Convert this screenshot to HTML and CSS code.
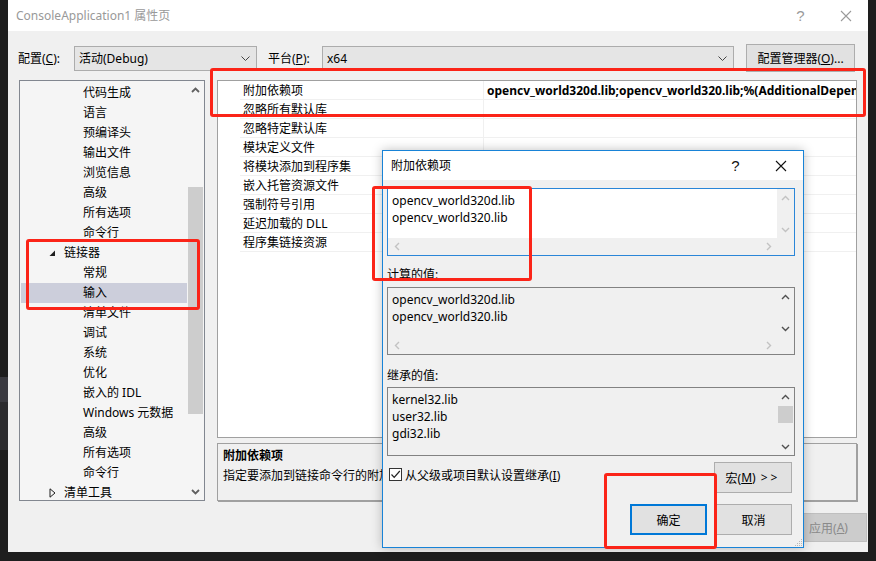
FILE: index.html
```html
<!DOCTYPE html>
<html lang="zh-CN">
<head>
    <meta charset="UTF-8">
    <title>ConsoleApplication1 属性页</title>
    <link rel="stylesheet" href="styles.css">
</head>
<body>
<div class="desktop">
    <div class="ide-strip ide-strip-a"></div>
    <div class="ide-strip ide-strip-b"></div>

    <!-- property pages window -->
    <div class="window main-window">
        <div class="titlebar">
            <span class="title">ConsoleApplication1 属性页</span>
            <span class="caption-btn help">?</span>
            <span class="caption-btn close">
                <svg width="12" height="12" viewBox="0 0 12 12"><path d="M1 1L11 11M11 1L1 11" stroke="#9a9a9a" stroke-width="1.1" fill="none"/></svg>
            </span>
        </div>
        <div class="page">
            <div class="config-row">
                <span class="config-label">配置(<u>C</u>):</span>
                <div class="combo combo-config">
                    <span>活动(Debug)</span>
                    <svg width="9" height="5" viewBox="0 0 9 5"><polyline points="0.5,0.5 4.5,4.5 8.5,0.5" stroke="#444" fill="none"/></svg>
                </div>
                <span class="config-label platform-label">平台(<u>P</u>):</span>
                <div class="combo combo-platform">
                    <span>x64</span>
                    <svg width="9" height="5" viewBox="0 0 9 5"><polyline points="0.5,0.5 4.5,4.5 8.5,0.5" stroke="#444" fill="none"/></svg>
                </div>
                <button class="btn btn-manager">配置管理器(<u>O</u>)...</button>
            </div>

            <div class="content">
                <div class="tree">
                    <ul class="tree-list">
                        <li class="leaf">代码生成</li>
                        <li class="leaf">语言</li>
                        <li class="leaf">预编译头</li>
                        <li class="leaf">输出文件</li>
                        <li class="leaf">浏览信息</li>
                        <li class="leaf">高级</li>
                        <li class="leaf">所有选项</li>
                        <li class="leaf">命令行</li>
                        <li class="node">
                            <svg class="twisty" width="7" height="7" viewBox="0 0 7 7"><polygon points="6,0.5 6,6 0.5,6" fill="#1e1e1e"/></svg>链接器
                        </li>
                        <li class="leaf">常规</li>
                        <li class="leaf selected">输入</li>
                        <li class="leaf">清单文件</li>
                        <li class="leaf">调试</li>
                        <li class="leaf">系统</li>
                        <li class="leaf">优化</li>
                        <li class="leaf">嵌入的 IDL</li>
                        <li class="leaf">Windows 元数据</li>
                        <li class="leaf">高级</li>
                        <li class="leaf">所有选项</li>
                        <li class="leaf">命令行</li>
                        <li class="node">
                            <svg class="twisty" width="7" height="10" viewBox="0 0 7 10"><polygon points="1,0.8 6,5 1,9.2" fill="none" stroke="#1e1e1e"/></svg>清单工具
                        </li>
                    </ul>
                    <div class="vscroll tree-scroll">
                        <div class="arrow">
                            <svg width="9" height="6" viewBox="0 0 9 6"><polyline points="1,5 4.5,1.5 8,5" stroke="#606060" stroke-width="1.8" fill="none"/></svg>
                        </div>
                        <div class="track"><div class="thumb tree-thumb"></div></div>
                        <div class="arrow">
                            <svg width="9" height="6" viewBox="0 0 9 6"><polyline points="1,1 4.5,4.5 8,1" stroke="#606060" stroke-width="1.8" fill="none"/></svg>
                        </div>
                    </div>
                </div>

                <div class="right-col">
                    <div class="grid">
                        <div class="grid-row">
                            <span class="gutter"></span>
                            <span class="cell name">附加依赖项</span>
                            <span class="cell value strong">opencv_world320d.lib;opencv_world320.lib;%(AdditionalDependencies)</span>
                        </div>
                        <div class="grid-row"><span class="gutter"></span><span class="cell name">忽略所有默认库</span><span class="cell value"></span></div>
                        <div class="grid-row"><span class="gutter"></span><span class="cell name">忽略特定默认库</span><span class="cell value"></span></div>
                        <div class="grid-row"><span class="gutter"></span><span class="cell name">模块定义文件</span><span class="cell value"></span></div>
                        <div class="grid-row"><span class="gutter"></span><span class="cell name">将模块添加到程序集</span><span class="cell value"></span></div>
                        <div class="grid-row"><span class="gutter"></span><span class="cell name">嵌入托管资源文件</span><span class="cell value"></span></div>
                        <div class="grid-row"><span class="gutter"></span><span class="cell name">强制符号引用</span><span class="cell value"></span></div>
                        <div class="grid-row"><span class="gutter"></span><span class="cell name">延迟加载的 DLL</span><span class="cell value"></span></div>
                        <div class="grid-row"><span class="gutter"></span><span class="cell name">程序集链接资源</span><span class="cell value"></span></div>
                    </div>
                    <div class="desc">
                        <div class="desc-title">附加依赖项</div>
                        <div class="desc-text">指定要添加到链接命令行的附加项。</div>
                    </div>
                </div>
            </div>

            <div class="footer">
                <button class="btn btn-disabled">应用(<u>A</u>)</button>
            </div>
        </div>
    </div>

    <!-- additional dependencies dialog -->
    <div class="window dialog">
        <div class="titlebar dialog-titlebar">
            <span class="title dialog-title">附加依赖项</span>
            <span class="caption-btn help dark">?</span>
            <span class="caption-btn close">
                <svg width="12" height="12" viewBox="0 0 12 12"><path d="M1 1L11 11M11 1L1 11" stroke="#111" stroke-width="1.1" fill="none"/></svg>
            </span>
        </div>
        <div class="dialog-body">
            <div class="listbox editable">
                <div class="listbox-main">
                    <div class="lines">
                        <div>opencv_world320d.lib</div>
                        <div>opencv_world320.lib</div>
                    </div>
                    <div class="vscroll">
                        <div class="arrow"><svg width="9" height="6" viewBox="0 0 9 6"><polyline points="1,5 4.5,1.5 8,5" stroke="#c2c2c2" stroke-width="1.4" fill="none"/></svg></div>
                        <div class="track"></div>
                        <div class="arrow"><svg width="9" height="6" viewBox="0 0 9 6"><polyline points="1,1 4.5,4.5 8,1" stroke="#c2c2c2" stroke-width="1.4" fill="none"/></svg></div>
                    </div>
                </div>
                <div class="hscroll">
                    <div class="arrow"><svg width="6" height="9" viewBox="0 0 6 9"><polyline points="5,1 1.5,4.5 5,8" stroke="#c2c2c2" stroke-width="1.4" fill="none"/></svg></div>
                    <div class="track"></div>
                    <div class="arrow"><svg width="6" height="9" viewBox="0 0 6 9"><polyline points="1,1 4.5,4.5 1,8" stroke="#c2c2c2" stroke-width="1.4" fill="none"/></svg></div>
                    <div class="corner"></div>
                </div>
            </div>

            <div class="field-label label-computed">计算的值:</div>
            <div class="listbox readonly">
                <div class="listbox-main">
                    <div class="lines">
                        <div>opencv_world320d.lib</div>
                        <div>opencv_world320.lib</div>
                    </div>
                    <div class="vscroll">
                        <div class="arrow"><svg width="9" height="6" viewBox="0 0 9 6"><polyline points="1,5 4.5,1.5 8,5" stroke="#505050" stroke-width="1.4" fill="none"/></svg></div>
                        <div class="track"></div>
                        <div class="arrow"><svg width="9" height="6" viewBox="0 0 9 6"><polyline points="1,1 4.5,4.5 8,1" stroke="#505050" stroke-width="1.4" fill="none"/></svg></div>
                    </div>
                </div>
                <div class="hscroll">
                    <div class="arrow"><svg width="6" height="9" viewBox="0 0 6 9"><polyline points="5,1 1.5,4.5 5,8" stroke="#c2c2c2" stroke-width="1.4" fill="none"/></svg></div>
                    <div class="track"></div>
                    <div class="arrow"><svg width="6" height="9" viewBox="0 0 6 9"><polyline points="1,1 4.5,4.5 1,8" stroke="#c2c2c2" stroke-width="1.4" fill="none"/></svg></div>
                    <div class="corner"></div>
                </div>
            </div>

            <div class="field-label label-inherited">继承的值:</div>
            <div class="listbox readonly inherited">
                <div class="listbox-main">
                    <div class="lines">
                        <div>kernel32.lib</div>
                        <div>user32.lib</div>
                        <div>gdi32.lib</div>
                    </div>
                    <div class="vscroll">
                        <div class="arrow"><svg width="9" height="6" viewBox="0 0 9 6"><polyline points="1,5 4.5,1.5 8,5" stroke="#505050" stroke-width="1.4" fill="none"/></svg></div>
                        <div class="track"><div class="thumb inherited-thumb"></div></div>
                        <div class="arrow"><svg width="9" height="6" viewBox="0 0 9 6"><polyline points="1,1 4.5,4.5 8,1" stroke="#505050" stroke-width="1.4" fill="none"/></svg></div>
                    </div>
                </div>
            </div>

            <div class="option-row">
                <div class="check">
                    <span class="checkbox">
                        <svg width="11" height="11" viewBox="0 0 11 11"><polyline points="1.5,5.5 4.2,8.3 9.8,2" stroke="#222" stroke-width="1.2" fill="none"/></svg>
                    </span>
                    <span>从父级或项目默认设置继承(<u>I</u>)</span>
                </div>
                <button class="btn btn-macro">宏(<u>M</u>) <span class="gt">&gt;&gt;</span></button>
            </div>

            <div class="dialog-buttons">
                <button class="btn btn-default">确定</button>
                <button class="btn">取消</button>
            </div>
        </div>
        <svg class="grip" width="10" height="10" viewBox="0 0 10 10">
            <g fill="#b8b8b8">
                <rect x="8" y="2" width="1" height="1"/><rect x="6" y="4" width="1" height="1"/><rect x="8" y="4" width="1" height="1"/>
                <rect x="4" y="6" width="1" height="1"/><rect x="6" y="6" width="1" height="1"/><rect x="8" y="6" width="1" height="1"/>
                <rect x="2" y="8" width="1" height="1"/><rect x="4" y="8" width="1" height="1"/><rect x="6" y="8" width="1" height="1"/><rect x="8" y="8" width="1" height="1"/>
            </g>
        </svg>
    </div>

    <!-- red annotation boxes -->
    <div class="mark mark-value"></div>
    <div class="mark mark-tree"></div>
    <div class="mark mark-edit"></div>
    <div class="mark mark-ok"></div>
</div>
</body>
</html>
```

FILE: styles.css
```css
* {
    box-sizing: border-box;
}
body {
    margin: 0;
    background-color: #1e1e1e;
    font-family: 'Segoe UI', 'Noto Sans', 'Noto Sans CJK SC', sans-serif;
    font-size: 12px;
    color: #000;
}
u {
    text-decoration: underline;
    text-underline-offset: 1px;
}
.desktop {
    position: relative;
    width: 876px;
    height: 561px;
    overflow: hidden;
    background-color: #1e1e1e;
}
.ide-strip {
    position: absolute;
    left: 0;
    width: 8px;
}
.ide-strip-a {
    top: 377px;
    height: 25px;
    background-color: #3a3a40;
}
.ide-strip-b {
    top: 402px;
    height: 48px;
    background-color: #2b2b2e;
}

/* windows */
.window {
    position: absolute;
    background-color: #f0f0f0;
}
.main-window {
    left: 8px;
    top: 0;
    width: 860px;
    height: 552px;
}
.titlebar {
    height: 31px;
    background-color: #fff;
    display: flex;
    align-items: center;
    padding-left: 8px;
}
.title {
    flex: 1;
    color: #999;
    font-size: 12px;
    padding-bottom: 1px;
}
.caption-btn {
    width: 45px;
    text-align: center;
    display: flex;
    align-items: center;
    justify-content: center;
}
.help {
    font-family: 'Liberation Sans', sans-serif;
    font-size: 15px;
    color: #9a9a9a;
}
.help.dark {
    color: #111;
}

.page {
    padding: 13px 7px 0 10px;
}
.config-row {
    display: flex;
    align-items: center;
    height: 28px;
}
.config-label {
    width: 56px;
}
.platform-label {
    width: 54px;
    margin-left: 11px;
}
.combo {
    height: 25px;
    background-color: #e5e5e5;
    border: 1px solid #acacac;
    display: flex;
    align-items: center;
    justify-content: space-between;
    padding: 0 6px 0 4px;
}
.combo-config {
    width: 183px;
}
.combo-platform {
    width: 412px;
}
.btn {
    font-family: inherit;
    font-size: 12px;
    color: #000;
    background-color: #e1e1e1;
    border: 1px solid #adadad;
    padding: 0;
    display: flex;
    align-items: center;
    justify-content: center;
}
.btn-manager {
    margin-left: 12px;
    width: 109px;
    height: 28px;
}

.content {
    display: flex;
    gap: 12px;
    margin-top: 8px;
}
.tree {
    margin-left: 1px;
    width: 186px;
    height: 421px;
    border: 1px solid #828790;
    background-color: #f5f5f5;
    display: flex;
}
.tree-list {
    list-style: none;
    margin: 0;
    padding: 2px 0 0 0;
    flex: 1;
}
.tree-list li {
    height: 20px;
    line-height: 20px;
    white-space: nowrap;
    display: flex;
    align-items: center;
}
.tree-list .leaf {
    padding-left: 63px;
}
.tree-list .node {
    padding-left: 29px;
}
.twisty {
    margin-right: 8px;
}
.tree-list .selected {
    background-color: #cccedb;
    margin-left: 1px;
    padding-left: 62px;
}

.vscroll {
    width: 17px;
    display: flex;
    flex-direction: column;
    background-color: #f0f0f0;
}
.vscroll .arrow {
    height: 17px;
    display: flex;
    align-items: center;
    justify-content: center;
}
.vscroll .track {
    flex: 1;
}
.thumb {
    background-color: #cdcdcd;
    margin: 0 1px;
}
.tree-scroll {
    background-color: #f5f5f5;
}
.tree-thumb {
    margin-top: 89px;
    height: 227px;
}

.right-col {
    width: 640px;
    display: flex;
    flex-direction: column;
    gap: 5px;
}
.grid {
    height: 358px;
    background-color: #fff;
    border: 1px solid #a0a0a0;
}
.grid-row {
    display: flex;
    height: 19px;
}
.gutter {
    width: 22px;
    flex: none;
}
.cell {
    border-bottom: 1px solid #f0f0f0;
    padding-top: 2px;
    line-height: 16px;
    white-space: nowrap;
    overflow: hidden;
}
.name {
    width: 244px;
    flex: none;
    padding-left: 3px;
    border-right: 1px solid #f0f0f0;
}
.value {
    flex: 1;
    padding-left: 3px;
}
.strong {
    font-weight: bold;
}
.desc {
    height: 58px;
    border: 1px solid #a0a0a0;
    box-shadow: 1px 1px 0 #a0a0a0;
    padding: 2px 5px 0;
    overflow: hidden;
}
.desc-title {
    font-weight: bold;
    line-height: 20px;
}
.desc-text {
    width: 160px;
    line-height: 20px;
    white-space: nowrap;
    overflow: hidden;
}

.footer {
    display: flex;
    justify-content: flex-end;
    margin-top: 12px;
    margin-right: -6px;
}
.footer .btn {
    width: 77px;
    height: 29px;
}
.btn-disabled {
    background-color: #cccccc;
    border-color: #bfbfbf;
    color: #8a8a8a;
}

/* dialog */
.dialog {
    left: 382px;
    top: 150px;
    width: 422px;
    height: 398px;
    border: 1px solid #1883d7;
    box-shadow: 0 0 10px rgba(0, 0, 0, 0.25);
}
.dialog-titlebar {
    height: 29px;
}
.dialog-title {
    color: #000;
}
.dialog-body {
    padding: 8px 8px 0 4px;
}
.listbox {
    border: 1px solid #828282;
    display: flex;
    flex-direction: column;
    height: 68px;
}
.listbox.editable {
    border-color: #2a86d8;
    background-color: #fff;
}
.listbox.readonly {
    background-color: #f0f0f0;
}
.listbox.inherited {
    height: 69px;
}
.listbox-main {
    flex: 1;
    display: flex;
    min-height: 0;
}
.lines {
    flex: 1;
    padding: 3px 4px;
    line-height: 17px;
    white-space: nowrap;
}
.hscroll {
    height: 17px;
    display: flex;
    background-color: #f0f0f0;
}
.hscroll .arrow {
    width: 17px;
    display: flex;
    align-items: center;
    justify-content: center;
}
.hscroll .track {
    flex: 1;
}
.hscroll .corner {
    width: 17px;
}
.inherited-thumb {
    margin-top: 1px;
    height: 17px;
}
.field-label {
    line-height: 17px;
}
.label-computed {
    margin-top: 10px;
    margin-bottom: 4px;
}
.label-inherited {
    margin-top: 12px;
    margin-bottom: 3px;
}
.option-row {
    display: flex;
    justify-content: space-between;
    align-items: flex-start;
    margin-top: 6px;
}
.check {
    display: flex;
    align-items: center;
    height: 17px;
    margin-top: 4px;
    margin-left: 2px;
    gap: 3px;
}
.checkbox {
    width: 13px;
    height: 13px;
    border: 1px solid #333;
    background-color: #fff;
    display: flex;
    align-items: center;
    justify-content: center;
}
.btn-macro {
    width: 78px;
    height: 31px;
    margin-right: 3px;
}
.gt {
    letter-spacing: 3px;
    margin-left: 5px;
}
.dialog-buttons {
    display: flex;
    justify-content: flex-end;
    gap: 8px;
    margin-top: 11px;
    margin-right: 3px;
}
.dialog-buttons .btn {
    width: 77px;
    height: 31px;
}
.btn-default {
    border: 2px solid #0078d7;
}
.grip {
    position: absolute;
    right: 0;
    bottom: 0;
}

/* annotations */
.mark {
    position: absolute;
    border: 3px solid #fb2418;
    border-radius: 3px;
}
.mark-value {
    left: 210px;
    top: 68px;
    width: 656px;
    height: 49px;
}
.mark-tree {
    left: 26px;
    top: 239px;
    width: 174px;
    height: 71px;
}
.mark-edit {
    left: 372px;
    top: 186px;
    width: 160px;
    height: 95px;
}
.mark-ok {
    left: 604px;
    top: 473px;
    width: 113px;
    height: 76px;
}
```
